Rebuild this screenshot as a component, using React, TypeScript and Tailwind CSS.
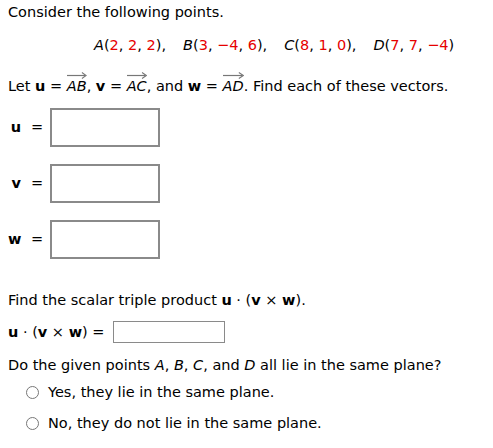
const Vec = ({ name }: { name: string }) => (
  <span className="relative inline-block italic">
    <svg
      className="absolute left-0 top-[-7px] w-full h-[8px]"
      viewBox="0 0 24 8"
      preserveAspectRatio="none"
    >
      <line x1="0" y1="4.5" x2="22" y2="4.5" stroke="#777" strokeWidth="1.2" />
      <path d="M18 1.5 L23 4.5 L18 7.5" fill="none" stroke="#777" strokeWidth="1.2" />
    </svg>
    {name}
  </span>
);

const Red = ({ children }: { children: React.ReactNode }) => (
  <span className="text-[#e60000]">{children}</span>
);

const Point = ({ label, coords }: { label: string; coords: string[] }) => (
  <span>
    <i>{label}</i>(
    {coords.map((c, i) => (
      <span key={i}>
        <Red>{c}</Red>
        {i < coords.length - 1 ? ", " : ""}
      </span>
    ))}
    )
  </span>
);

const Radio = ({ label }: { label: string }) => (
  <div className="flex items-center gap-[9px] pl-[18px]">
    <span className="w-[13px] h-[13px] rounded-full border border-[#777] bg-white" />
    <span>{label}</span>
  </div>
);

export default function App() {
  const points = [
    { label: "A", coords: ["2", "2", "2"] },
    { label: "B", coords: ["3", "\u22124", "6"] },
    { label: "C", coords: ["8", "1", "0"] },
    { label: "D", coords: ["7", "7", "\u22124"] },
  ];

  return (
    <div
      className="bg-white text-black text-[14.5px] leading-[17px] px-[8px] pt-[4px]"
      style={{ fontFamily: "Verdana, 'DejaVu Sans', sans-serif" }}
    >
      <p>Consider the following points.</p>

      <p className="mt-[16px] pl-[86px] whitespace-nowrap">
        {points.map((p, i) => (
          <span key={p.label} className={i < points.length - 1 ? "mr-[17px]" : ""}>
            <Point label={p.label} coords={p.coords} />
            {i < points.length - 1 ? "," : ""}
          </span>
        ))}
      </p>

      <p className="mt-[24px]">
        Let <b>u</b> = <Vec name="AB" />, <b>v</b> = <Vec name="AC" />, and <b>w</b> ={" "}
        <Vec name="AD" />. Find each of these vectors.
      </p>

      <div className="flex flex-col gap-[17px] mt-[13px]">
        {["u", "v", "w"].map((v) => (
          <div key={v} className="flex items-center">
            <b className="w-[13px] text-right">{v}</b>
            <span className="ml-[10px] w-[19px]">=</span>
            <div className="w-[110px] h-[39px] border-2 border-[#8a8a8a]" />
          </div>
        ))}
      </div>

      <p className="mt-[33px]">
        Find the scalar triple product <b>u</b> · (<b>v</b> × <b>w</b>).
      </p>

      <div className="flex items-center mt-[12px]">
        <span>
          <b>u</b> · (<b>v</b> × <b>w</b>) =
        </span>
        <div className="ml-[9px] w-[112px] h-[22px] border border-[#8a8a8a]" />
      </div>

      <p className="mt-[14px]">
        Do the given points <i>A</i>, <i>B</i>, <i>C</i>, and <i>D</i> all lie in the same plane?
      </p>

      <div className="flex flex-col gap-[14px] mt-[10px]">
        <Radio label="Yes, they lie in the same plane." />
        <Radio label="No, they do not lie in the same plane." />
      </div>
    </div>
  );
}
